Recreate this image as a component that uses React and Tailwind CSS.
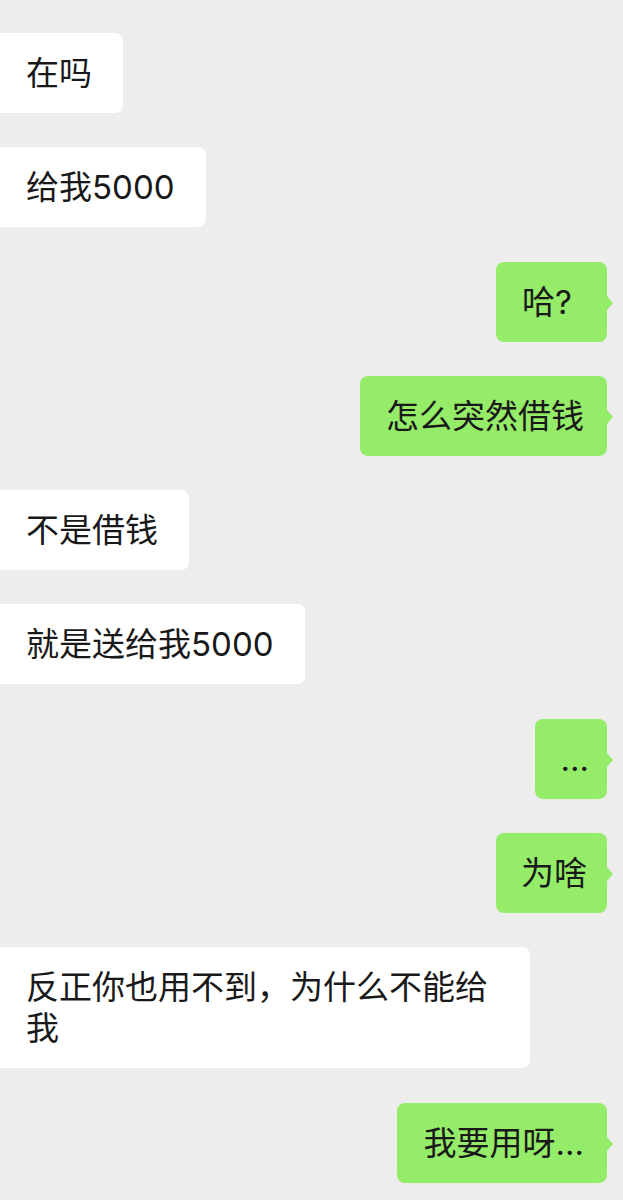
const messages = [
  { from: 'them', text: '在吗' },
  { from: 'them', text: '给我5000' },
  { from: 'me', text: '哈?', pad: 'min-w-[111px] pl-[26px] pr-[23px]' },
  { from: 'me', text: '怎么突然借钱' },
  { from: 'them', text: '不是借钱' },
  { from: 'them', text: '就是送给我5000' },
  { from: 'me', text: '...', pad: 'pl-[25px] pr-[18px]' },
  { from: 'me', text: '为啥', pad: 'pl-[25px] pr-[20px]' },
  { from: 'them', text: '反正你也用不到，为什么不能给我' },
  { from: 'me', text: '我要用呀...' },
]

function Bubble({ from, text, pad }) {
  if (from === 'me') {
    return (
      <div className="flex justify-end pr-[16px]">
        <div className={`relative rounded-[8px] bg-[#95ec69] pt-[20px] pb-[19px] text-[33px] leading-[41px] text-[#191919] ${pad || 'pl-[26px] pr-[23px]'}`}>
          {text}
          <span className="absolute -right-[6px] top-[34px] h-0 w-0 border-y-[7px] border-l-[6px] border-y-transparent border-l-[#95ec69]" />
        </div>
      </div>
    )
  }
  return (
    <div className="flex justify-start">
      <div className="max-w-[530px] rounded-r-[8px] bg-white pl-[26px] pr-[31px] pt-[20px] pb-[19px] text-[33px] leading-[41px] text-[#191919]">
        {text}
      </div>
    </div>
  )
}

export default function App() {
  return (
    <div
      className="flex min-h-[1200px] w-full flex-col gap-[34.3px] bg-[#ededed] pt-[33px]"
      style={{ fontFamily: 'Inter, "Noto Sans CJK SC", sans-serif' }}
    >
      {messages.map((m, i) => (
        <Bubble key={i} {...m} />
      ))}
    </div>
  )
}
